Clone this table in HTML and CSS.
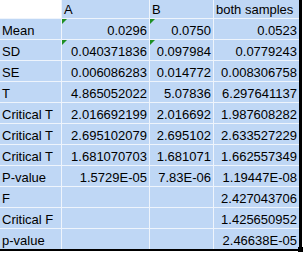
FILE: index.html
```html
<!DOCTYPE html>
<html>
<head>
<meta charset="utf-8">
<link rel="stylesheet" href="styles.css">
</head>
<body>
<div class="wrap">
  <div class="sheet">
    <div class="c corner"></div>
    <div class="c h">A</div>
    <div class="c h">B</div>
    <div class="c h">both samples</div>

    <div class="c l">Mean</div>
    <div class="c n flag">0.0296</div>
    <div class="c n flag">0.0750</div>
    <div class="c n">0.0523</div>

    <div class="c l">SD</div>
    <div class="c n flag">0.040371836</div>
    <div class="c n flag">0.097984</div>
    <div class="c n">0.0779243</div>

    <div class="c l">SE</div>
    <div class="c n">0.006086283</div>
    <div class="c n">0.014772</div>
    <div class="c n">0.008306758</div>

    <div class="c l">T</div>
    <div class="c n">4.865052022</div>
    <div class="c n">5.07836</div>
    <div class="c n">6.297641137</div>

    <div class="c l">Critical T</div>
    <div class="c n">2.016692199</div>
    <div class="c n">2.016692</div>
    <div class="c n">1.987608282</div>

    <div class="c l">Critical T</div>
    <div class="c n">2.695102079</div>
    <div class="c n">2.695102</div>
    <div class="c n">2.633527229</div>

    <div class="c l">Critical T</div>
    <div class="c n">1.681070703</div>
    <div class="c n">1.681071</div>
    <div class="c n">1.662557349</div>

    <div class="c l">P-value</div>
    <div class="c n">1.5729E-05</div>
    <div class="c n">7.83E-06</div>
    <div class="c n">1.19447E-08</div>

    <div class="c l">F</div>
    <div class="c n"></div>
    <div class="c n"></div>
    <div class="c n">2.427043706</div>

    <div class="c l">Critical F</div>
    <div class="c n"></div>
    <div class="c n"></div>
    <div class="c n">1.425650952</div>

    <div class="c l">p-value</div>
    <div class="c n"></div>
    <div class="c n"></div>
    <div class="c n">2.46638E-05</div>
  </div>
  <div class="handle"></div>
</div>
</body>
</html>
```
FILE: styles.css
```css
html, body {
  margin: 0;
  padding: 0;
  background: #ffffff;
}
.wrap {
  position: relative;
  width: 304px;
  height: 254px;
  overflow: hidden;
}
.sheet {
  display: grid;
  grid-template-columns: 61px 87px 63px 85px;
  grid-template-rows: 18px repeat(11, 20px);
  gap: 1px;
  background: #eef4fc;
  width: fit-content;
  border-right: 3px solid #000;
  border-bottom: 2px solid #000;
  font-family: "Liberation Sans", Arial, sans-serif;
  font-size: 13px;
  color: #000;
}
.c {
  position: relative;
  background: #bfd7f5;
  box-sizing: border-box;
  line-height: 14px;
  padding: 5px 2px 0 2px;
  white-space: nowrap;
  overflow: visible;
}
.corner {
  background: #ffffff;
}
.h {
  padding-top: 3px;
}
.l {
  text-align: left;
}
.n {
  text-align: right;
}
.flag::before {
  content: "";
  position: absolute;
  left: 0;
  top: 0;
  width: 0;
  height: 0;
  border-top: 5px solid #1f8f24;
  border-right: 5px solid transparent;
}
.handle {
  position: absolute;
  left: 298px;
  top: 247px;
  width: 5px;
  height: 5px;
  background: #000;
}
```
